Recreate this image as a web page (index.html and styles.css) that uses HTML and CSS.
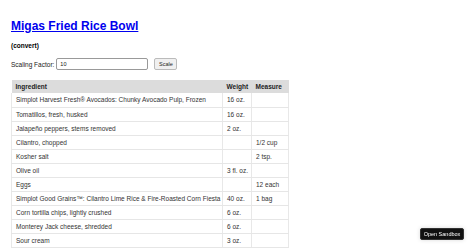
FILE: index.html
```html
<!DOCTYPE html>
<html>
<head>
<meta charset="utf-8">
<link rel="stylesheet" href="styles.css">
</head>
<body>
<main class="page">
  <h1 class="title"><a href="#" class="title-link">Migas Fried Rice Bowl</a></h1>
  <p class="convert">(convert)</p>
  <form class="scale-form">
    <label class="scale-label">Scaling Factor:</label>
    <input class="scale-input" type="text" value="10">
    <button class="scale-btn" type="button">Scale</button>
  </form>
  <table class="recipe">
    <colgroup>
      <col class="col-ing">
      <col class="col-w">
      <col class="col-m">
    </colgroup>
    <thead>
      <tr><th>Ingredient</th><th>Weight</th><th>Measure</th></tr>
    </thead>
    <tbody>
      <tr><td>Simplot Harvest Fresh® Avocados: Chunky Avocado Pulp, Frozen</td><td>16 oz.</td><td></td></tr>
      <tr><td>Tomatillos, fresh, husked</td><td>16 oz.</td><td></td></tr>
      <tr><td>Jalapeño peppers, stems removed</td><td>2 oz.</td><td></td></tr>
      <tr><td>Cilantro, chopped</td><td></td><td>1/2 cup</td></tr>
      <tr><td>Kosher salt</td><td></td><td>2 tsp.</td></tr>
      <tr><td>Olive oil</td><td>3 fl. oz.</td><td></td></tr>
      <tr><td>Eggs</td><td></td><td>12 each</td></tr>
      <tr><td>Simplot Good Grains™: Cilantro Lime Rice &amp; Fire-Roasted Corn Fiesta</td><td>40 oz.</td><td>1 bag</td></tr>
      <tr><td>Corn tortilla chips, lightly crushed</td><td>6 oz.</td><td></td></tr>
      <tr><td>Monterey Jack cheese, shredded</td><td>6 oz.</td><td></td></tr>
      <tr><td>Sour cream</td><td>3 oz.</td><td></td></tr>
    </tbody>
  </table>
</main>
<button class="sandbox-btn" type="button">Open Sandbox</button>
</body>
</html>
```
FILE: styles.css
```css
html, body {
  margin: 0;
  padding: 0;
  background: #fff;
  font-family: "Liberation Sans", Arial, sans-serif;
  color: #333;
}
.page {
  padding: 19px 11px 0 11px;
}
.title {
  margin: 0;
  font-size: 12px;
  line-height: 14px;
  font-weight: bold;
}
.title-link {
  color: #0000ee;
  text-decoration: underline;
}
.convert {
  margin: 9px 0 0 0;
  font-size: 6.5px;
  line-height: 8px;
  font-weight: bold;
  color: #000;
}
.scale-form {
  display: flex;
  align-items: center;
  margin-top: 8px;
  height: 12px;
}
.scale-label {
  font-size: 6.5px;
  color: #222;
  margin-right: 2px;
}
.scale-input {
  box-sizing: border-box;
  width: 92px;
  height: 12px;
  border: 1px solid #999;
  border-radius: 2px;
  padding: 0 3px;
  font-family: inherit;
  font-size: 5.5px;
  color: #111;
  margin: 0;
}
.scale-btn {
  box-sizing: border-box;
  margin: 0 0 0 6px;
  height: 12px;
  width: 23px;
  padding: 0;
  border: 1px solid #bbb;
  border-radius: 2px;
  background: #f0f0f0;
  font-family: inherit;
  font-size: 5.5px;
  color: #222;
}
.recipe {
  margin-top: 10px;
  border-collapse: collapse;
  table-layout: fixed;
  width: 277px;
  font-size: 6.5px;
}
.col-ing { width: 211px; }
.col-w { width: 29px; }
.col-m { width: 37px; }
.recipe th {
  background: #dcdcdc;
  text-align: left;
  font-weight: bold;
  color: #222;
  height: 13px;
  padding: 0 3px 0 4px;
  border: 0;
  box-sizing: border-box;
}
.recipe td {
  height: 14px;
  padding: 0 3px 0 4px;
  border: 1px solid #e8e8e8;
  border-top: 0;
  white-space: nowrap;
  overflow: hidden;
  color: #333;
  box-sizing: border-box;
}
.recipe tbody tr td {
  border-bottom: 1px solid #e6e6e6;
}
.sandbox-btn {
  position: fixed;
  right: 10px;
  bottom: 8px;
  width: 44px;
  height: 12px;
  padding: 0;
  background: #111;
  color: #fff;
  border: 1px solid #333;
  border-radius: 2px;
  font-family: inherit;
  font-size: 5.5px;
  box-shadow: 0 0 4px rgba(0,0,0,0.15);
}
```
